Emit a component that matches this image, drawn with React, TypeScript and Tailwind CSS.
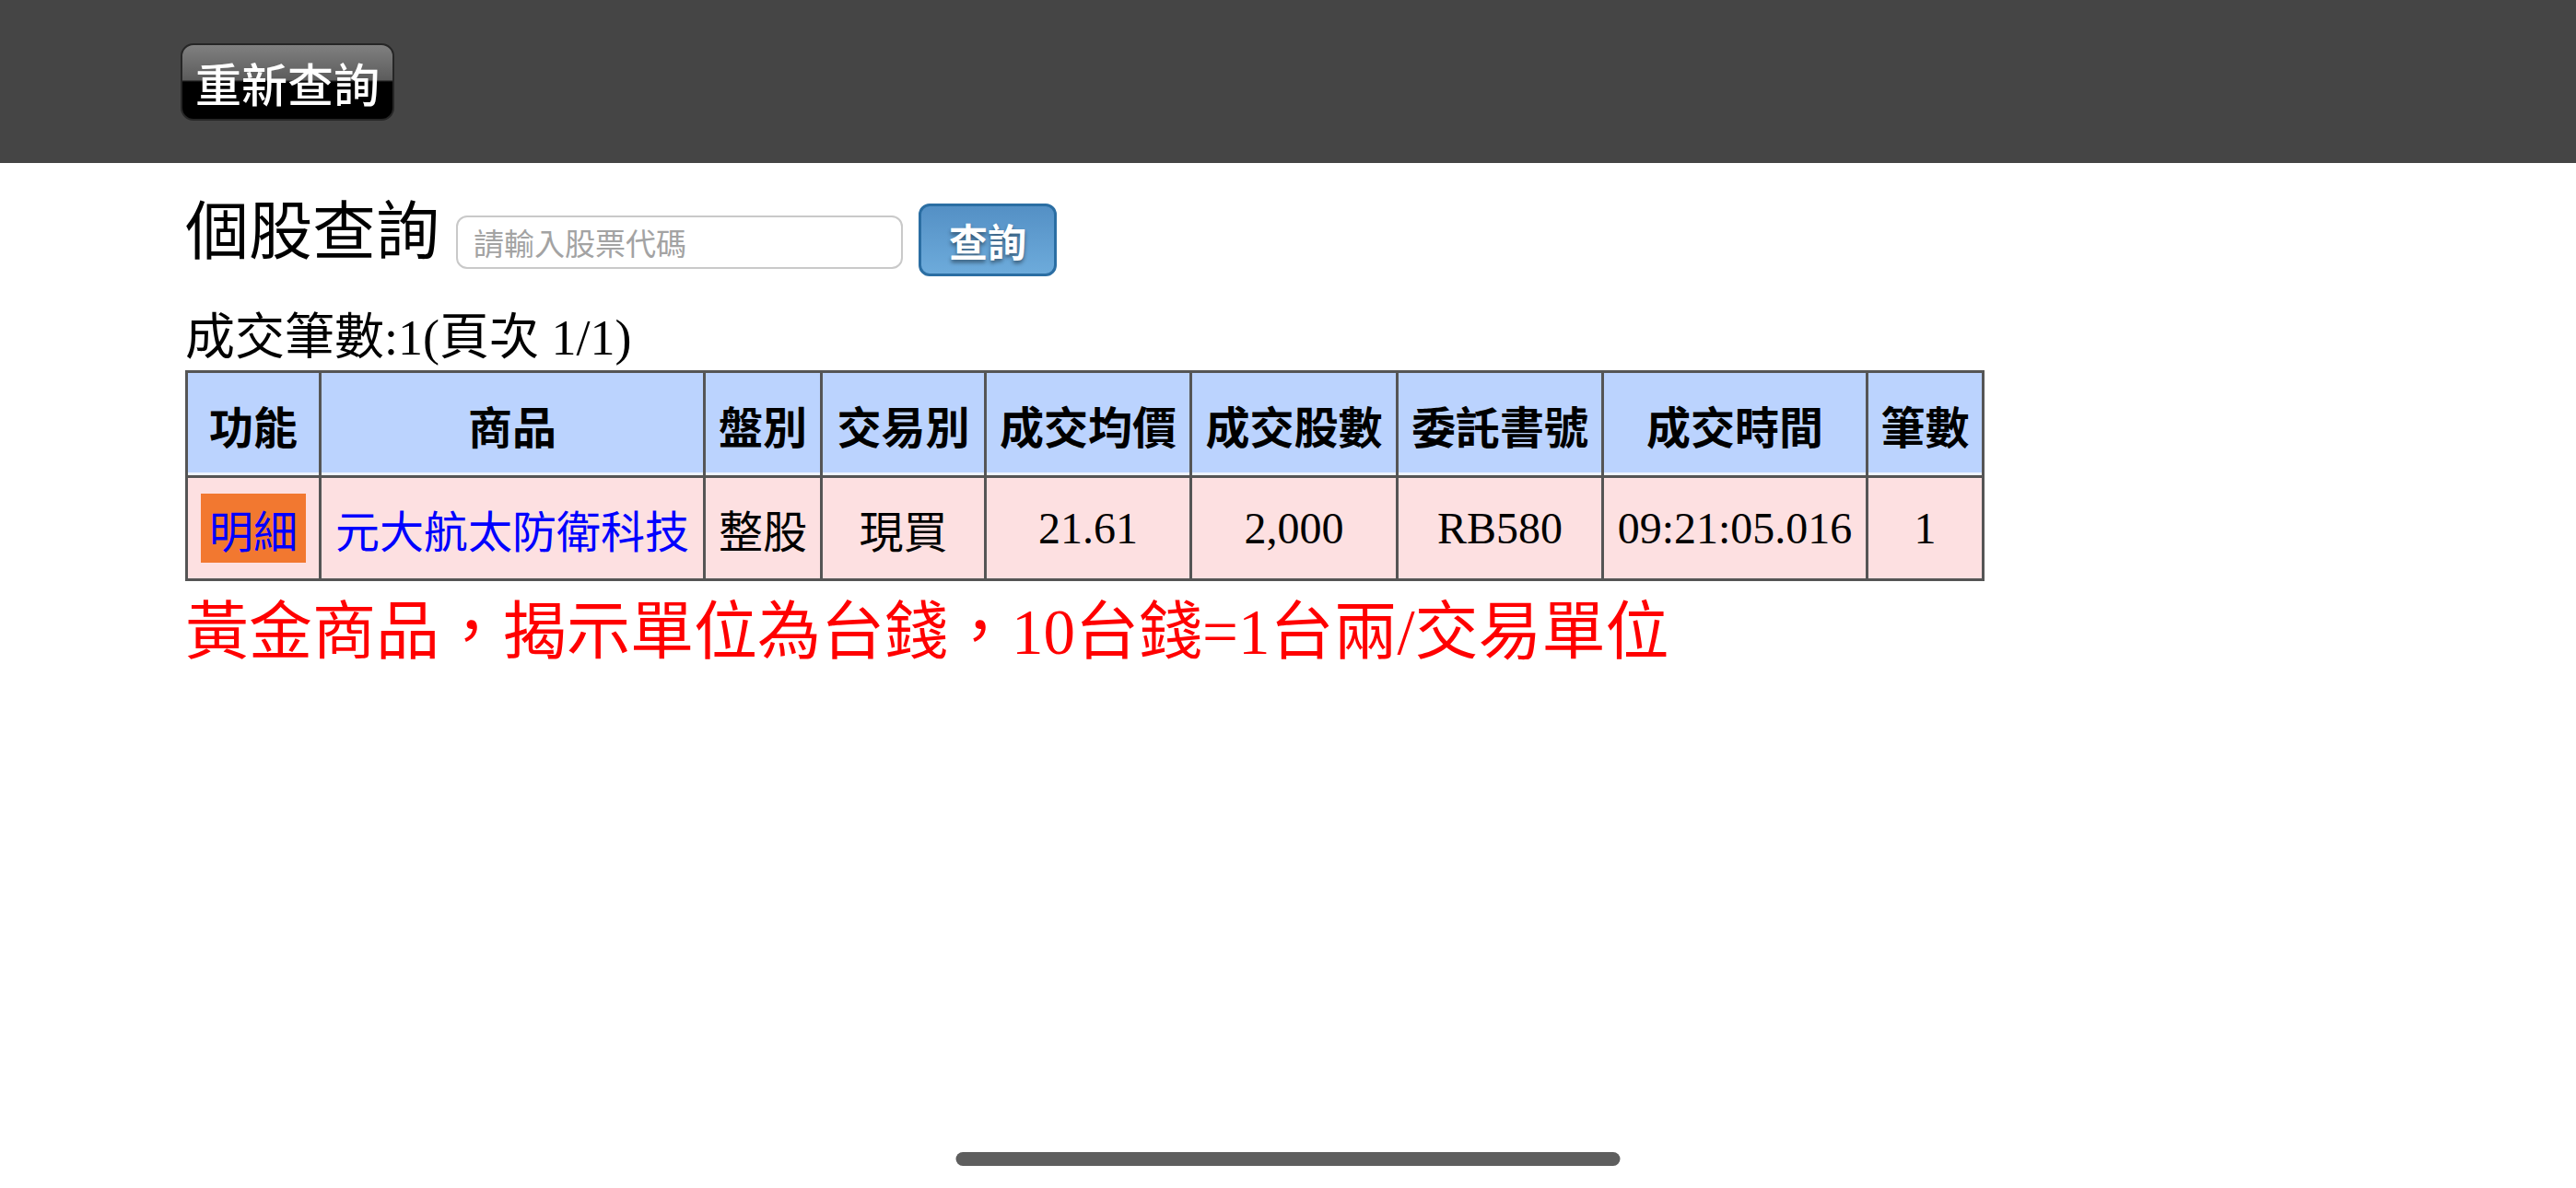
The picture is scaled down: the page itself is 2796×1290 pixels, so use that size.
import React from "react";

const serif = "font-['Liberation_Serif','Noto_Sans_CJK_TC',serif]";

const cols = [145, 417, 127, 178, 223, 224, 223, 287, 126];
const heads = ["功能", "商品", "盤別", "交易別", "成交均價", "成交股數", "委託書號", "成交時間", "筆數"];

export default function App() {
  return (
    <div className={`relative min-h-[1290px] w-full bg-white text-black ${serif}`}>
      <header className="flex h-[177px] items-center bg-[#454545] pl-[196px]">
        <button className="flex h-[84px] w-[232px] items-center justify-center rounded-[14px] border-2 border-[#262626] bg-[linear-gradient(to_bottom,#808080_0%,#5c5c5c_47%,#000000_50%,#000000_100%)] font-['Noto_Sans_CJK_TC',sans-serif] text-[50px] font-medium leading-none text-white">
          重新查詢
        </button>
      </header>

      <main className="pl-[201px] pt-[44px]">
        <div className="flex items-start">
          <h1 className="mt-[-2px] font-['Noto_Sans_CJK_TC',sans-serif] text-[69px] font-normal leading-[55px]">
            個股查詢
          </h1>
          <input
            placeholder="請輸入股票代碼"
            className="ml-[18px] mt-[13px] h-[58px] w-[485px] rounded-[12px] border-2 border-[#c9c9c9] bg-white px-[17px] font-['Noto_Sans_CJK_TC',sans-serif] text-[33px] leading-none text-black outline-none placeholder:text-[#a3a3a3]"
          />
          <button className="ml-[17px] flex h-[79px] w-[150px] items-center justify-center rounded-[12px] border-[3px] border-[#2b6ea3] bg-[linear-gradient(to_bottom,#5490c5,#6dabdb)] font-['Noto_Sans_CJK_TC',sans-serif] text-[42px] font-bold leading-none text-white [text-shadow:0_3px_4px_rgba(0,0,0,0.45)]">
            查詢
          </button>
        </div>

        <p className="mt-[40px] text-[54px] leading-[54px]">成交筆數:1(頁次 1/1)</p>

        <table className="mt-[8px] w-[1950px] table-fixed border-collapse border-[3px] border-[#555]">
          <colgroup>
            {cols.map((w, i) => (
              <col key={i} style={{ width: `${w}px` }} />
            ))}
          </colgroup>
          <thead>
            <tr className="h-[114px] bg-[#bbd3fe]">
              {heads.map((h) => (
                <th
                  key={h}
                  className="border-[3px] border-[#555] p-0 text-center align-middle font-['Noto_Sans_CJK_TC',sans-serif] text-[48px] font-bold leading-none shadow-[inset_0_-3px_0_#eef3fd]"
                >
                  {h}
                </th>
              ))}
            </tr>
          </thead>
          <tbody>
            <tr className="h-[112px] bg-[#fde0e1] text-center align-middle text-[48px] leading-none">
              <td className="border-[3px] border-[#555] p-0">
                <span className="inline-flex h-[75px] w-[114px] items-center justify-center bg-[#f27830] font-['Noto_Sans_CJK_TC',sans-serif] text-[#0000ff]">
                  明細
                </span>
              </td>
              <td className="border-[3px] border-[#555] p-0 font-['Noto_Sans_CJK_TC',sans-serif] text-[#0000ff]">
                元大航太防衛科技
              </td>
              <td className="border-[3px] border-[#555] p-0 font-['Noto_Sans_CJK_TC',sans-serif]">整股</td>
              <td className="border-[3px] border-[#555] p-0 font-['Noto_Sans_CJK_TC',sans-serif]">現買</td>
              <td className="border-[3px] border-[#555] p-0">21.61</td>
              <td className="border-[3px] border-[#555] p-0">2,000</td>
              <td className="border-[3px] border-[#555] p-0">RB580</td>
              <td className="border-[3px] border-[#555] p-0">09:21:05.016</td>
              <td className="border-[3px] border-[#555] p-0">1</td>
            </tr>
          </tbody>
        </table>

        <p className="mt-[22px] text-[69px] leading-[69px] text-[#ff0000]">
          黃金商品，揭示單位為台錢，10台錢=1台兩/交易單位
        </p>
      </main>

      <div className="absolute bottom-[24px] left-1/2 h-[15px] w-[721px] -translate-x-1/2 rounded-full bg-[#5e5e5e]" />
    </div>
  );
}
